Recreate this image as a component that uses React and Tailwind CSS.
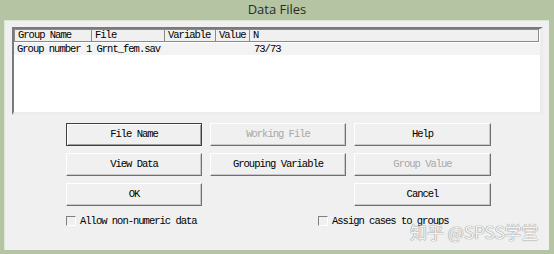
import React from "react";

const mono = "font-mono text-[10.5px] tracking-[-1px] leading-none";

function Btn({ children, disabled, def }) {
  const base =
    "h-[23px] flex items-center justify-center bg-[#f0f0f0] " + mono;
  const border = def
    ? "border border-[#404040] shadow-[inset_1px_1px_0_#ffffff,inset_-1px_-1px_0_#a0a0a0]"
    : "border border-t-white border-l-white border-r-[#707070] border-b-[#707070] shadow-[inset_-1px_-1px_0_#c8c8c8]";
  return (
    <div className={`${base} ${border} ${disabled ? "text-[#a8a8a8]" : "text-black"}`}>
      {children}
    </div>
  );
}

function Check({ label }) {
  return (
    <div className="flex items-center gap-[4px]">
      <div className="w-[10px] h-[10px] border-t border-l border-t-[#808080] border-l-[#808080] border-r border-b border-r-white border-b-white bg-[#f0f0f0]" />
      <span className={`${mono} text-black`}>{label}</span>
    </div>
  );
}

export default function App() {
  const cols = [
    { label: "Group Name", w: "w-[77px]" },
    { label: "File", w: "w-[73px]" },
    { label: "Variable", w: "w-[51px]" },
    { label: "Value", w: "w-[34px]" },
    { label: "N", w: "flex-1" },
  ];
  return (
    <div className="w-[554px] h-[254px] bg-[#b5c5a4] flex flex-col overflow-hidden">
      <div className="h-[20px] flex items-center justify-center font-[Open_Sans] text-[13px] text-[#2a2a2a]">
        Data Files
      </div>
      <div className="flex-1 ml-[4px] mr-[5px] mb-[4px] bg-[#f0f0f0] border-t border-l border-[#dfe6d6] relative flex flex-col">
        {/* list box */}
        <div className="ml-[7px] mt-[6px] w-[531px] h-[88px] bg-white border-l-2 border-t-2 border-l-[#7a7a7a] border-t-[#7a7a7a] border-r-[3px] border-b-[3px] border-r-[#ececec] border-b-[#ececec] flex flex-col">
          <div className="h-[13px] flex bg-[#f0f0f0] border border-[#8a8a8a] mr-[1px]">
            {cols.map((c, i) => (
              <div
                key={c.label}
                className={`${c.w} ${i < cols.length - 1 ? "border-r border-[#8a8a8a]" : ""} flex items-center pl-[3px] ${mono} text-black`}
              >
                {c.label}
              </div>
            ))}
          </div>
          <div className="h-[12px] flex items-center bg-[#f3f3f3] mt-[1px]">
            <div className={`w-[240px] pl-[3px] ${mono} text-black`}>Group number 1 Grnt_fem.sav</div>
            <div className={`${mono} text-black`}>73/73</div>
          </div>
        </div>
        {/* buttons */}
        <div className="ml-[61px] mt-[8px] grid grid-cols-[136px_136px_137px] gap-x-[8px] gap-y-[7px] w-fit">
          <Btn def>File Name</Btn>
          <Btn disabled>Working File</Btn>
          <Btn>Help</Btn>
          <Btn>View Data</Btn>
          <Btn>Grouping Variable</Btn>
          <Btn disabled>Group Value</Btn>
          <Btn>OK</Btn>
          <div />
          <Btn>Cancel</Btn>
        </div>
        {/* checkboxes */}
        <div className="mt-[10px] ml-[61px] flex">
          <div className="w-[252px]">
            <Check label="Allow non-numeric data" />
          </div>
          <Check label="Assign cases to groups" />
        </div>
        <div className="absolute left-[405px] top-[202px] font-[Noto_Sans_CJK_SC] text-[17px] leading-none text-[#f4f4f4] [text-shadow:0_0_1px_#8c8c8c,0_0_1px_#8c8c8c]">
          知乎 @SPSS学堂
        </div>
      </div>
    </div>
  );
}
